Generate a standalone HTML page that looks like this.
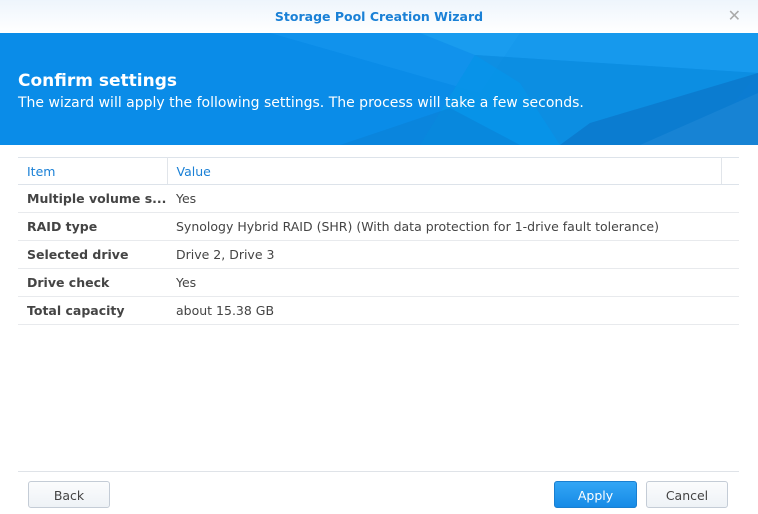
<!DOCTYPE html>
<html><head><style>
body{margin:0;width:758px;height:514px;background:#fff;font-family:"DejaVu Sans",sans-serif;position:relative;overflow:hidden}
.title{position:absolute;top:0;left:0;width:758px;height:33px;background:linear-gradient(#eef5fc,#fff);text-align:center;line-height:33px;font-size:12.5px;font-weight:bold;color:#1a80d6}
.x{position:absolute;right:17px;top:8px;color:#aaa;font-size:16px;line-height:16px}
.band{position:absolute;top:33px;left:0;width:758px;height:112px;background:#0a8ce8;overflow:hidden}
.band h1{position:absolute;left:18px;top:38px;margin:0;font-size:17px;color:#fff}
.band p{position:absolute;left:18px;top:62px;margin:0;font-size:14px;color:#fff}
table{position:absolute;top:157px;left:18px;width:721px;border-collapse:collapse;font-size:12.5px}
td{height:27px;border-bottom:1px solid #e8eaed;padding:0 0 0 9px;color:#444}
tr.h td{height:26px;color:#1a80d6;border-top:1px solid #dde3ea;border-bottom:1px solid #dde3ea}
td.k{font-weight:bold;width:140px}
.sep{position:absolute;top:471px;left:18px;width:721px;height:1px;background:#dfe3e8}
.btn{position:absolute;top:481px;height:27px;border:1px solid #c4ccd6;border-radius:3px;background:linear-gradient(#fbfcfd,#eef2f6);text-align:center;line-height:27px;font-size:12.5px;color:#444;box-sizing:border-box}
</style></head><body>
<div class="title">Storage Pool Creation Wizard</div>
<div class="x">✕</div>
<div class="band">
<svg width="758" height="112" style="position:absolute;left:0;top:0">
<polygon points="270,0 520,0 480,60" fill="#1596ee" opacity=".6"/>
<polygon points="420,0 758,0 758,40 475,22" fill="#22a5f2" opacity=".5"/>
<polygon points="475,22 758,40 700,112 420,112" fill="#0d8fe0" opacity=".7"/>
<polygon points="475,22 520,50 560,112 420,112" fill="#0596ec" opacity=".6"/>
<polygon points="340,112 450,75 520,112" fill="#0a80d6" opacity=".6"/>
<polygon points="590,90 758,40 758,112 560,112" fill="#0b78cc" opacity=".8"/>
<polygon points="640,112 758,60 758,112" fill="#1a84d4" opacity=".8"/>
</svg>
<h1>Confirm settings</h1>
<p>The wizard will apply the following settings. The process will take a few seconds.</p>
</div>
<table>
<tr class="h"><td style="border-right:1px solid #e1e5ea">Item</td><td style="border-right:1px solid #e1e5ea">Value</td><td style="width:17px;padding:0"></td></tr>
<tr><td class="k">Multiple volume s...</td><td colspan="2">Yes</td></tr>
<tr><td class="k">RAID type</td><td colspan="2">Synology Hybrid RAID (SHR) (With data protection for 1-drive fault tolerance)</td></tr>
<tr><td class="k">Selected drive</td><td colspan="2">Drive 2, Drive 3</td></tr>
<tr><td class="k">Drive check</td><td colspan="2">Yes</td></tr>
<tr><td class="k">Total capacity</td><td colspan="2">about 15.38 GB</td></tr>
</table>
<div class="sep"></div>
<div class="btn" style="left:28px;width:82px">Back</div>
<div class="btn" style="left:554px;width:83px;background:linear-gradient(#33a6f5,#168ae6);border-color:#1a7fd0;color:#fff">Apply</div>
<div class="btn" style="left:646px;width:82px">Cancel</div>
</body></html>
